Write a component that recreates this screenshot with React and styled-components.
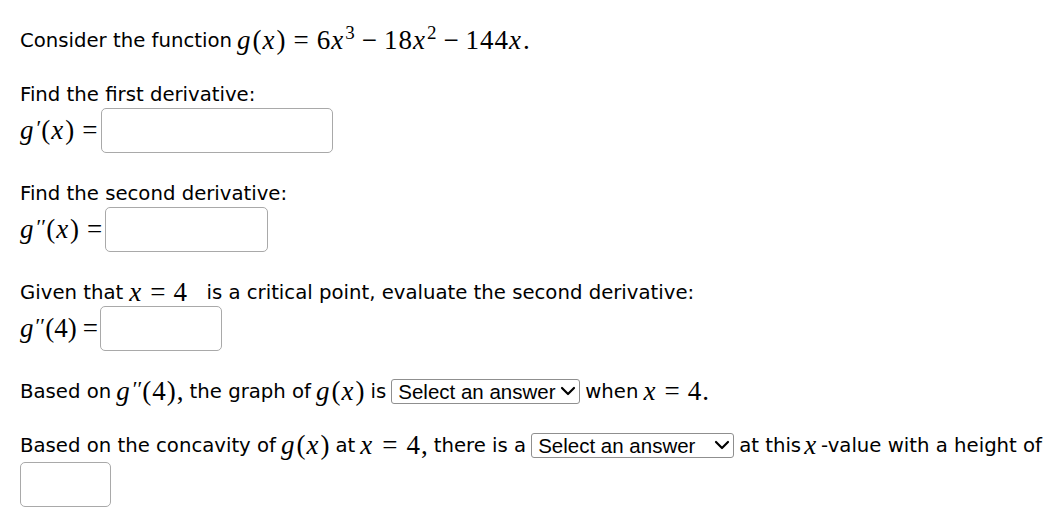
import React from "react";
import styled, { createGlobalStyle } from "styled-components";
import { ChevronDown } from "lucide-react";

const GlobalStyle = createGlobalStyle`
  html, body {
    margin: 0;
    padding: 0;
    background: #fff;
  }
  body {
    font-family: "DejaVu Sans", "Liberation Sans", sans-serif;
    color: #000;
  }
`;

const Page = styled.div`
  display: flex;
  flex-direction: column;
  gap: 26px;
  padding: 26px 0 0 20px;
  font-size: 19.7px;
`;

const Block = styled.div`
  display: flex;
  flex-direction: column;
`;

const Line = styled.div`
  display: flex;
  align-items: center;
  height: ${(p) => p.h || 28}px;
  white-space: pre;
`;

const Math = styled.span`
  font-family: "Liberation Serif", "DejaVu Serif", serif;
  font-size: 27px;
  letter-spacing: ${(p) => (p.tight ? 0 : 1)}px;
  margin: 0 ${(p) => p.gap ?? 5}px;
  white-space: nowrap;
`;

const V = styled.i`
  font-style: italic;
  margin-right: 1px;
`;

const Op = styled.span`
  margin: 0 ${(p) => p.sp ?? 7}px;
  margin-right: ${(p) => p.end ?? p.sp ?? 7}px;
`;

const Sup = styled.sup`
  font-size: 19px;
  vertical-align: 10px;
  line-height: 0;
`;

const Prime = styled.span`
  font-size: 22px;
  margin-left: 1px;
  vertical-align: 4px;
  letter-spacing: 0;
`;

const AnswerBox = styled.input`
  box-sizing: border-box;
  width: ${(p) => p.w}px;
  height: 45px;
  border: 1px solid #a9a9a9;
  border-radius: 5px;
  background: #fff;
`;

const SelectWrap = styled.span`
  position: relative;
  display: inline-flex;
  margin: 0 5px;
`;

const Select = styled.select`
  appearance: none;
  box-sizing: border-box;
  width: ${(p) => p.w}px;
  height: 25px;
  padding: 0 0 0 6px;
  border: 1px solid #8f8f8f;
  border-radius: 3px;
  background: #fff;
  font-family: "Liberation Sans", Arial, sans-serif;
  font-size: 20.5px;
  line-height: 23px;
  color: #000;
`;

const Chevron = styled(ChevronDown)`
  position: absolute;
  right: 0;
  top: 0;
  pointer-events: none;
`;

const Dropdown = ({ w }) => (
  <SelectWrap>
    <Select w={w} defaultValue="">
      <option value="">Select an answer</option>
    </Select>
    <Chevron size={24} strokeWidth={2.2} color="#000" />
  </SelectWrap>
);

const G = ({ primes = 0, arg = <V>x</V> }) => (
  <>
    <V>g</V>
    {primes > 0 && <Prime>{"′".repeat(primes)}</Prime>}({arg})
  </>
);

const Label = ({ tight, children }) => (
  <Math gap={0} tight={tight}>
    {children}
    <Op sp={tight ? 6 : 7} end={2}>
      =
    </Op>
  </Math>
);

export default function App() {
  return (
    <>
      <GlobalStyle />
      <Page>
        <Block>
          <Line>
            Consider the function
            <Math gap={5}>
              <G />
              <Op>=</Op>6<V>x</V>
              <Sup>3</Sup>
              <Op sp={6}>−</Op>18<V>x</V>
              <Sup>2</Sup>
              <Op sp={6}>−</Op>144<V>x</V>.
            </Math>
          </Line>
        </Block>

        <Block>
          <Line>Find the first derivative:</Line>
          <Line h={45}>
            <Label>
              <G primes={1} />
            </Label>
            <AnswerBox w={232} />
          </Line>
        </Block>

        <Block>
          <Line>Find the second derivative:</Line>
          <Line h={45}>
            <Label>
              <G primes={2} />
            </Label>
            <AnswerBox w={163} />
          </Line>
        </Block>

        <Block>
          <Line>
            Given that
            <Math gap={6}>
              <V>x</V>
              <Op>=</Op>4
            </Math>
            {"  is a critical point, evaluate the second derivative:"}
          </Line>
          <Line h={45}>
            <Label tight>
              <G primes={2} arg="4" />
            </Label>
            <AnswerBox w={122} />
          </Line>
        </Block>

        <Block>
          <Line>
            Based on
            <Math gap={5}>
              <G primes={2} arg="4" />,
            </Math>
            the graph of
            <Math gap={5}>
              <G />
            </Math>
            is
            <Dropdown w={189} />
            when
            <Math gap={5}>
              <V>x</V>
              <Op>=</Op>4.
            </Math>
          </Line>
        </Block>

        <Block>
          <Line>
            Based on the concavity of
            <Math gap={5}>
              <G />
            </Math>
            at
            <Math gap={5}>
              <V>x</V>
              <Op sp={8}>=</Op>4,
            </Math>
            there is a
            <Dropdown w={203} />
            at this
            <Math gap={3}>
              <V>x</V>
            </Math>
            -value with a height of
          </Line>
          <Line h={50}>
            <AnswerBox w={91} />
          </Line>
        </Block>
      </Page>
    </>
  );
}
